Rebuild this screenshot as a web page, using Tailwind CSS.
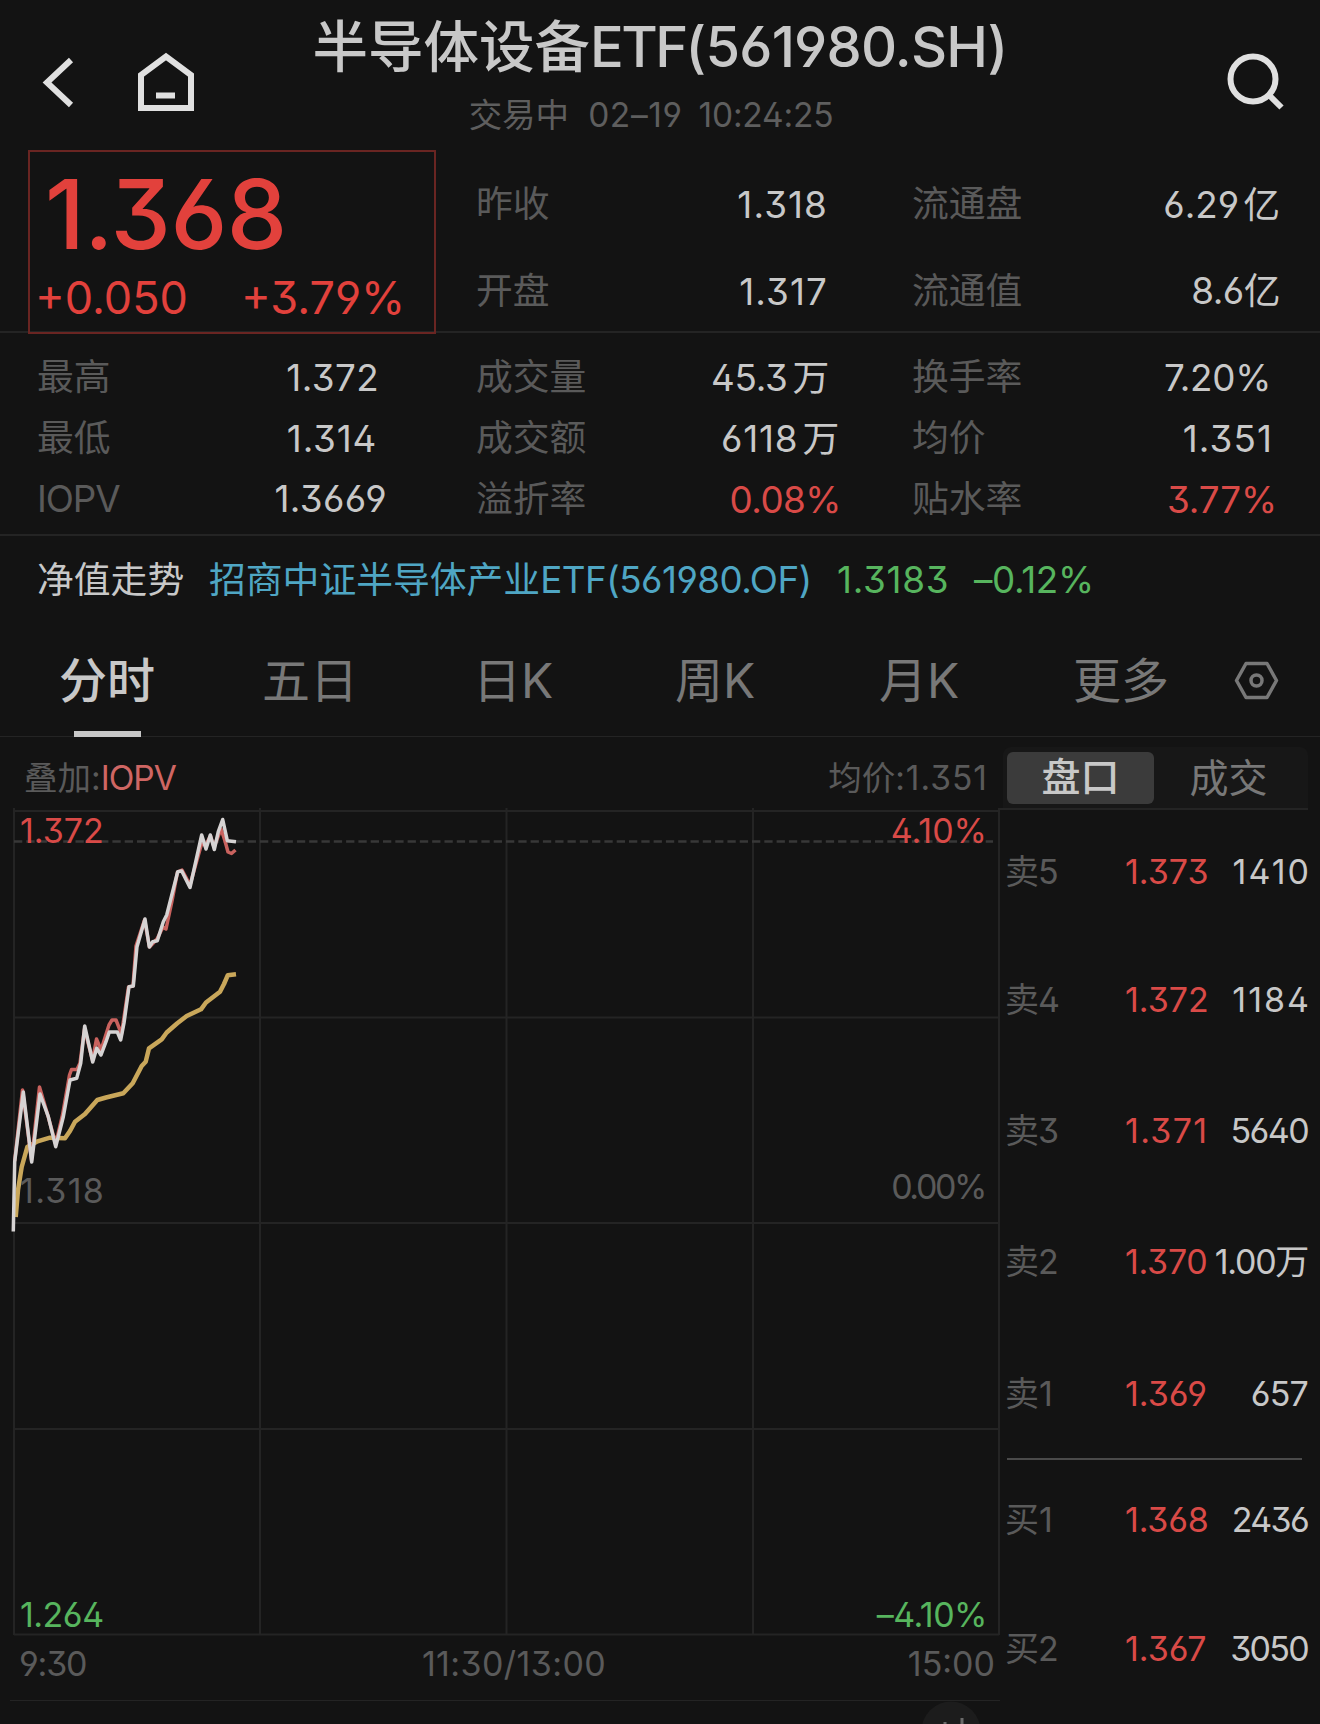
<!DOCTYPE html>
<html lang="zh-CN">

<head>
  <meta charset="UTF-8" />
  <meta name="viewport" content="width=device-width, initial-scale=1.0" />
  <title>半导体设备ETF(561980.SH)</title>
  <script src="https://cdn.jsdelivr.net/npm/@tailwindcss/browser@4"></script>
</head>

<body class="bg-[#131313] text-[#c8c8c8] font-['Inter','Noto_Sans_CJK_SC',sans-serif] [font-feature-settings:'cv03','cv04','ss01'] w-[1320px] h-[1724px] overflow-hidden whitespace-nowrap">

  <!-- Header -->
  <header class="h-[150px] flex">
    <div class="w-[300px] flex">
      <svg class="w-[300px] h-[150px]" viewBox="0 0 300 150" fill="none" stroke="#e0e0e0" stroke-width="6">
        <path d="M71 60L47 82.500L71 105" />
        <path d="M141 108V75L166 56.500L191 75V108Z" />
        <path d="M156 95.500H175" />
      </svg>
    </div>
    <div class="w-[720px] flex flex-col items-center">
      <h1 class="mt-[14px] h-[66px] leading-[66px] text-[55.5px] font-medium">半导体设备<span class="text-[56px] tracking-[-2.6px]">ETF</span><span class="text-[56px] tracking-[-0.8px]">(561980.SH)</span></h1>
      <p class="mt-[10px] mr-[18px] h-[50px] leading-[50px] text-[33.5px] text-[#5e5e5e] flex gap-[19px]"><span>交易中</span><span class="tracking-[0.6px]">02–19</span><span class="tracking-[-0.2px] -ml-[3px]">10:24:25</span></p>
    </div>
    <svg class="w-[300px] h-[150px]" viewBox="1020 0 300 150" fill="none" stroke="#e0e0e0" stroke-width="6">
      <circle cx="1253" cy="79" r="22.500" />
      <path d="M1268 94L1281.500 107.500" />
    </svg>
  </header>

  <!-- Last price and top quotes -->
  <section class="h-[183px] flex border-b-2 border-[#242424] text-[36.8px]">
    <div class="ml-[28px] w-[408px] h-[184px] shrink-0 border-2 border-[#6a2522] text-[#e2413c]">
      <div class="mt-[12px] ml-[15px] h-[100px] leading-[100px] text-[96px] font-medium tracking-[-0.5px]">1.368</div>
      <div class="mt-[9px] flex h-[50px] leading-[50px] text-[45px]">
        <span class="ml-[5px] w-[206px]">+0.050</span>
        <span>+3.79%</span>
      </div>
    </div>
    <div class="ml-[40px] w-[436px] pt-[10px]">
      <div class="h-[87px] flex items-center justify-between pr-[84px]"><span class="text-[#5a5a5a]">昨收</span><span class="pt-[3px] tracking-[1.1px]">1.318</span></div>
      <div class="h-[87px] flex items-center justify-between pr-[84px]"><span class="text-[#5a5a5a]">开盘</span><span class="pt-[3px] tracking-[1.1px]">1.317</span></div>
    </div>
    <div class="w-[408px] pt-[10px]">
      <div class="h-[87px] flex items-center justify-between pr-[40px]"><span class="text-[#5a5a5a]">流通盘</span><span class="pt-[3px]">6.29<span class="ml-[4px]">亿</span></span></div>
      <div class="h-[87px] flex items-center justify-between pr-[40px]"><span class="text-[#5a5a5a]">流通值</span><span class="tracking-[-0.5px]">8.6亿</span></div>
    </div>
  </section>

  <!-- Detailed quotes -->
  <section class="h-[203px] pt-[13px] border-b-2 border-[#242424] grid grid-cols-[476px_436px_408px] auto-rows-[61px] text-[36.8px]">
    <div class="flex items-center justify-between pl-[37px] pr-[97px]"><span class="text-[#5a5a5a]">最高</span><span class="pt-[3px] tracking-[0.4px]">1.372</span></div>
    <div class="flex items-center justify-between pr-[83px]"><span class="text-[#5a5a5a]">成交量</span><span class="pt-[3px] tracking-[-0.3px]">45.3<span class="ml-[5px]">万</span></span></div>
    <div class="flex items-center justify-between pr-[49px]"><span class="text-[#5a5a5a]">换手率</span><span class="pt-[3px] tracking-[-0.3px]">7.20%</span></div>
    <div class="flex items-center justify-between pl-[37px] pr-[99px]"><span class="text-[#5a5a5a]">最低</span><span class="pt-[3px] tracking-[0.8px]">1.314</span></div>
    <div class="flex items-center justify-between pr-[72px]"><span class="text-[#5a5a5a]">成交额</span><span class="pt-[3px] tracking-[0.8px]">6118<span class="ml-[4px]">万</span></span></div>
    <div class="flex items-center justify-between pr-[47px]"><span class="text-[#5a5a5a]">均价</span><span class="pt-[3px] tracking-[1.1px]">1.351</span></div>
    <div class="flex items-center justify-between pl-[37px] pr-[89px]"><span class="text-[#5a5a5a] tracking-[-0.03em]">IOPV</span><span class="tracking-[0.4px]">1.3669</span></div>
    <div class="flex items-center justify-between pr-[71px]"><span class="text-[#5a5a5a]">溢折率</span><span class="pt-[3px] text-[#d94a47] tracking-[-0.5px]">0.08%</span></div>
    <div class="flex items-center justify-between pr-[43px]"><span class="text-[#5a5a5a]">贴水率</span><span class="pt-[3px] text-[#d94a47] tracking-[-0.1px]">3.77%</span></div>
  </section>

  <!-- Net value -->
  <section class="h-[87px] flex items-center pl-[37px] text-[36.8px]">
    <span class="w-[172px]">净值走势</span>
    <span class="w-[628px] text-[#4fa6c4]">招商中证半导体产业<span class="tracking-[-0.5px]">ETF(561980.OF)</span></span>
    <span class="w-[137px] text-[#57b55e] tracking-[0.7px]">1.3183</span>
    <span class="text-[#57b55e] tracking-[-0.3px]">–0.12%</span>
  </section>

  <!-- Period tabs -->
  <nav class="h-[114px] border-b border-[#242424] flex pt-[27px] text-[48px] leading-[62px] text-[#787878]">
    <div class="ml-[59px] w-[203px] text-[#c8c8c8] font-medium">分时
      <div class="ml-[15px] mt-[19px] w-[67px] h-[6px] bg-[#c8c8c8]"></div>
    </div>
    <div class="w-[211px]">五日</div>
    <div class="w-[202px]">日K</div>
    <div class="w-[204px]">周K</div>
    <div class="w-[194px]">月K</div>
    <div class="w-[158px]">更多</div>
    <svg class="mt-[10px] w-[48px] h-[42px]" viewBox="1230 660 48 42" fill="none" stroke="#787878" stroke-width="3.500">
      <path d="M1245 663.500H1266L1275.500 680.500L1266 697.500H1245L1235.500 680.500Z" stroke-linejoin="round" />
      <circle cx="1255.500" cy="680.500" r="5.500" />
    </svg>
  </nav>

  <main class="flex">
    <!-- Intraday chart -->
    <section class="w-[1000px] h-[987px]">
      <div class="h-[71px] pl-[24px] pr-[12px] flex justify-between text-[33.5px] leading-[82px] text-[#5a5a5a]">
        <div>叠加:<span class="text-[#cf6663] tracking-[-0.03em]">IOPV</span></div>
        <div>均价<span class="tracking-[1px]">:1.351</span></div>
      </div>
      <svg class="w-[1000px] h-[916px]" viewBox="0 808 1000 916" fill="none">
        <g stroke="#242424" stroke-width="2">
          <path d="M14 808V1635M260 808V1634M506.500 808V1634M753 808V1634M999 808V1635" />
          <path d="M14 811H999M14 1017.500H999M14 1223H999M14 1429H999M14 1634.500H999" />
          <path d="M14 841.500H993" stroke="#383838" stroke-width="2.500" stroke-dasharray="8.300 4" />
        </g>
        <path d="M10 1700.500H1001" stroke="#242424" />
        <g class="text-[34px]">
          <text x="20" y="843" fill="#d94a47">1.372</text>
          <text x="987" y="843" text-anchor="end" fill="#d94a47">4.10%</text>
          <text x="20" y="1203" fill="#5a5a5a" class="tracking-[1.3px]">1.318</text>
          <text x="985" y="1199" text-anchor="end" fill="#5a5a5a" class="tracking-[-2.4px]">0.00%</text>
          <text x="20" y="1627" fill="#57b55e" class="tracking-[-0.5px]">1.264</text>
          <text x="987" y="1627" text-anchor="end" fill="#57b55e" class="tracking-[-0.5px]">–4.10%</text>
          <text x="19" y="1676" fill="#5a5a5a" class="tracking-[-1.2px]">9:30</text>
          <text x="514" y="1676" text-anchor="middle" fill="#5a5a5a" class="tracking-[0.4px]">11:30/13:00</text>
          <text x="995" y="1676" text-anchor="end" fill="#5a5a5a">15:00</text>
        </g>
        <!-- average, IOPV and price lines -->
        <g stroke-width="3.500" stroke-linejoin="round">
          <path stroke="#c9a75a" stroke-width="4.500" d="M15.700 1217L18 1190L21.700 1167L27.300 1147L36.700 1141.700L50 1137.700L65 1138.300L70 1131L75 1121.700L85 1114L97.300 1100L106 1097.500L123.300 1093.300L132.700 1083.300L141.700 1066L145.700 1061.700L149 1048.300L161.700 1039.300L166.700 1032.500L177 1023.500L186.700 1016L201 1009.300L206 1002.500L220 991.700L224 984L227.700 975.300L236 974.300" />
          <path stroke="#c9625e" d="M14.700 1161L22.500 1090L31.500 1160L39.500 1087L48 1116L55.700 1144L62.500 1115L69.500 1075L71.500 1069.500H77L80 1063L84.500 1029L92.500 1060L96.500 1039L101 1050L109 1025L112 1020H116L121.500 1034L128.500 987L133 986L136 946L144.500 920L149.500 947L157 939L163 927L166 929L172 901L177.500 872L182 870L190 885L201.500 844L205.500 845L210.500 836L214 847L221 829L225 841L228 852L231.500 853.500L235.500 850" />
          <path stroke="#d6d3d3" d="M13.300 1231.500L14.700 1161.700L23.300 1092L31.700 1162L40 1094L48.300 1116.700L55.700 1146.700L63.300 1116.700L70 1080L76.700 1078.300L80.700 1063.300L84.700 1026L92.700 1062L96.700 1048.300L101 1055L106 1041.700L109.300 1032H117.300L120.700 1040L124 1023L129 986.700L133.300 986L137 946.700L145 919L149.300 947L152.700 941.700L157.300 940.700L163.300 921.700L166.700 915L177.700 871.700L181.700 871L190 887.500L201.700 835L206 849L210.300 835L214.300 849.500L218.300 831.700L222.700 819.500L227.300 840.700L236 841.700" />
        </g>
        <circle cx="951" cy="1731" r="29.500" fill="#1c1c1c" />
        <path d="M962 1718V1724M945 1722V1724" stroke="#6a6a6a" stroke-width="3" />
      </svg>
    </section>

    <!-- Order book -->
    <aside class="w-[320px] pt-[10px] text-[34px]">
      <div class="ml-[3px] mr-[12px] h-[61px] pl-1 flex items-center rounded-t-lg bg-[#171717] text-[39px]">
        <div class="w-[147px] h-[52px] leading-[50px] rounded-md bg-[#3b3b3b] text-center font-medium">盘口</div>
        <div class="w-[149px] leading-[50px] text-center text-[#787878]">成交</div>
      </div>
      <div class="mr-[12px] h-[2px] bg-[#242424]"></div>
      <div class="h-[122px] pl-[5px] pr-[9px] flex items-center"><span class="w-[120px] text-[#5a5a5a] tracking-[-1px]">卖5</span><span class="text-[#d94a47]">1.373</span><span class="ml-auto tracking-[2px]">1410</span></div>
      <div class="h-[134px] pl-[5px] pr-[9px] flex items-center"><span class="w-[120px] text-[#5a5a5a] tracking-[-1px]">卖4</span><span class="text-[#d94a47]">1.372</span><span class="ml-auto tracking-[2px]">1184</span></div>
      <div class="h-[128px] pl-[5px] pr-[12px] flex items-center"><span class="w-[120px] text-[#5a5a5a] tracking-[-1px]">卖3</span><span class="text-[#d94a47] tracking-[1.3px]">1.371</span><span class="ml-auto tracking-[-1.6px]">5640</span></div>
      <div class="h-[134px] pl-[5px] pr-[12px] flex items-center"><span class="w-[120px] text-[#5a5a5a] tracking-[-1px]">卖2</span><span class="text-[#d94a47] tracking-[-0.3px]">1.370</span><span class="ml-auto tracking-[-1.3px]">1.00万</span></div>
      <div class="h-[130px] pl-[5px] pr-[12px] flex items-center"><span class="w-[120px] text-[#5a5a5a]">卖1</span><span class="text-[#d94a47]">1.369</span><span class="ml-auto tracking-[-0.8px]">657</span></div>
      <div class="ml-[7px] mr-[18px] h-[2px] bg-[#4a4a4a]"></div>
      <div class="h-[119px] pl-[5px] pr-[12px] flex items-center"><span class="w-[120px] text-[#5a5a5a]">买1</span><span class="text-[#d94a47] tracking-[-0.2px]">1.368</span><span class="ml-auto tracking-[-1.7px]">2436</span></div>
      <div class="h-[138px] pl-[5px] pr-[12px] flex items-center"><span class="w-[120px] text-[#5a5a5a] tracking-[-1px]">买2</span><span class="text-[#d94a47]">1.367</span><span class="ml-auto tracking-[-1.7px]">3050</span></div>
    </aside>
  </main>

</body>

</html>
